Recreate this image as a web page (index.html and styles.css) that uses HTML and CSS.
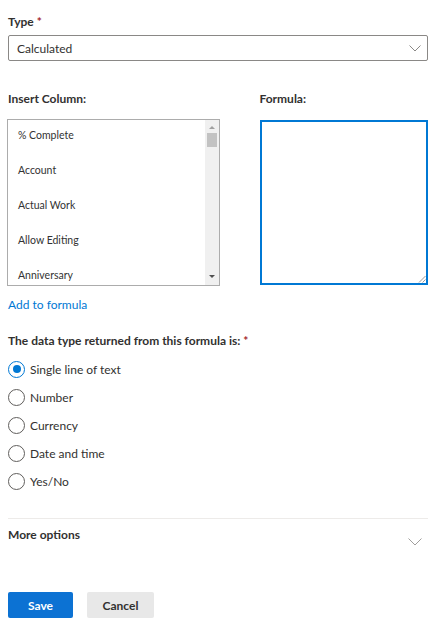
FILE: index.html
```html
<!DOCTYPE html>
<html>
<head>
<meta charset="utf-8">
<link rel="stylesheet" href="styles.css">
</head>
<body>
<div class="panel">
  <div class="field-label type-label">Type <span class="req">*</span></div>
  <div class="select">
    <span class="select-text">Calculated</span>
    <svg class="chev" width="12" height="7" viewBox="0 0 12 7"><path d="M0.5 0.5 L6 6 L11.5 0.5" fill="none" stroke="#8a8886" stroke-width="1"/></svg>
  </div>

  <div class="columns">
    <div class="col-left">
      <div class="field-label">Insert Column:</div>
      <div class="listbox">
        <ul class="list">
          <li>% Complete</li>
          <li>Account</li>
          <li>Actual Work</li>
          <li>Allow Editing</li>
          <li>Anniversary</li>
        </ul>
        <div class="scrollbar">
          <span class="arrow up"></span>
          <span class="thumb"></span>
          <span class="spacer"></span>
          <span class="arrow down"></span>
        </div>
      </div>
    </div>
    <div class="col-right">
      <div class="field-label">Formula:</div>
      <div class="formula">
        <svg class="grip" width="8" height="8" viewBox="0 0 8 8"><path d="M7.5 1 L1 7.5 M7.5 4.5 L4.5 7.5" stroke="#9a9a9a" stroke-width="1"/></svg>
      </div>
    </div>
  </div>

  <a class="link">Add to formula</a>

  <div class="field-label dtype">The data type returned from this formula is: <span class="req">*</span></div>
  <div class="radios">
    <div class="radio checked"><span class="dot"></span><span>Single line of text</span></div>
    <div class="radio"><span class="dot"></span><span>Number</span></div>
    <div class="radio"><span class="dot"></span><span>Currency</span></div>
    <div class="radio"><span class="dot"></span><span>Date and time</span></div>
    <div class="radio"><span class="dot"></span><span>Yes/No</span></div>
  </div>

  <div class="more">
    <span class="more-text">More options</span>
    <svg class="more-chev" width="14" height="8" viewBox="0 0 14 8"><path d="M0.5 0.5 L7 7 L13.5 0.5" fill="none" stroke="#a19f9d" stroke-width="1"/></svg>
  </div>

  <div class="buttons">
    <button class="btn primary">Save</button>
    <button class="btn secondary">Cancel</button>
  </div>
</div>
</body>
</html>
```
FILE: styles.css
```css
* { box-sizing: border-box; }
html, body { margin: 0; padding: 0; background: #fff; }
body {
  font-family: Lato, "Open Sans", "Liberation Sans", sans-serif;
  color: #323130;
  font-size: 12px;
}
.panel {
  width: 443px;
  padding: 13px 15px 0 8px;
}
.field-label {
  font-weight: 700;
  font-size: 12px;
  line-height: 18px;
  color: #323130;
}
.req { color: #a4262c; }
.type-label { margin-bottom: 4px; }
.select {
  height: 26px;
  border: 1px solid #8a8886;
  border-radius: 2px;
  display: flex;
  align-items: center;
  justify-content: space-between;
  padding: 0 8px 0 8px;
}
.select-text { font-size: 12px; }
.chev { margin-right: -2px; }

.columns {
  display: flex;
  margin-top: 29px;
}
.col-left { width: 214px; margin-left: -1px; }
.col-right { margin-left: 40px; width: 168px; }
.col-left .field-label { margin-left: 1px; }
.col-right .field-label { margin-left: -1px; }
.listbox {
  margin-top: 11px;
  height: 167px;
  border: 1px solid #acacac;
  display: flex;
  overflow: hidden;
}
.list {
  list-style: none;
  margin: -2px 0 0 0;
  padding: 0 0 0 10px;
  flex: 1;
  font-size: 10.5px;
  color: #333;
}
.list li {
  height: 35px;
  line-height: 35px;
}
.scrollbar {
  width: 14px;
  background: #f0f0f0;
  display: flex;
  flex-direction: column;
  align-items: center;
}
.arrow {
  width: 0; height: 0;
  border-left: 3px solid transparent;
  border-right: 3px solid transparent;
}
.arrow.up { border-bottom: 3px solid #a0a0a0; margin-top: 6px; }
.arrow.down { border-top: 3px solid #505050; margin-bottom: 7px; }
.thumb {
  width: 10px;
  height: 14px;
  background: #c2c2c2;
  margin-top: 4px;
}
.spacer { flex: 1; }
.formula {
  margin-top: 12px;
  height: 165px;
  border: 2px solid #0078d4;
  position: relative;
}
.grip { position: absolute; right: 0; bottom: 0; }

.link {
  display: block;
  margin-top: 10px;
  color: #0078d4;
  font-size: 12px;
  line-height: 18px;
}
.dtype { margin-top: 18px; }
.radios { margin-top: 5px; }
.radio {
  display: flex;
  align-items: center;
  height: 28px;
  font-size: 12px;
  color: #323130;
}
.dot {
  width: 17px;
  height: 17px;
  border: 1px solid #605e5c;
  border-radius: 50%;
  margin-right: 5px;
  position: relative;
  flex: none;
}
.radio.checked .dot { border-color: #0078d4; }
.radio.checked .dot::after {
  content: "";
  position: absolute;
  left: 3.5px; top: 3.5px;
  width: 8px; height: 8px;
  border-radius: 50%;
  background: #0078d4;
}
.more {
  margin-top: 23px;
  border-top: 1px solid #edebe9;
  display: flex;
  justify-content: space-between;
  padding-top: 7px;
  height: 74px;
}
.more-text {
  font-weight: 700;
  font-size: 12px;
  line-height: 18px;
}
.more-chev { margin-top: 12px; margin-right: 6px; }
.buttons {
  display: flex;
  gap: 14px;
}
.btn {
  height: 26px;
  border: none;
  border-radius: 2px;
  font-family: inherit;
  font-weight: 700;
  font-size: 12px;
  padding: 0;
}
.primary { width: 65px; background: #0c72d3; color: #fff; }
.secondary { width: 67px; background: #e8e8e8; color: #323130; }
```
